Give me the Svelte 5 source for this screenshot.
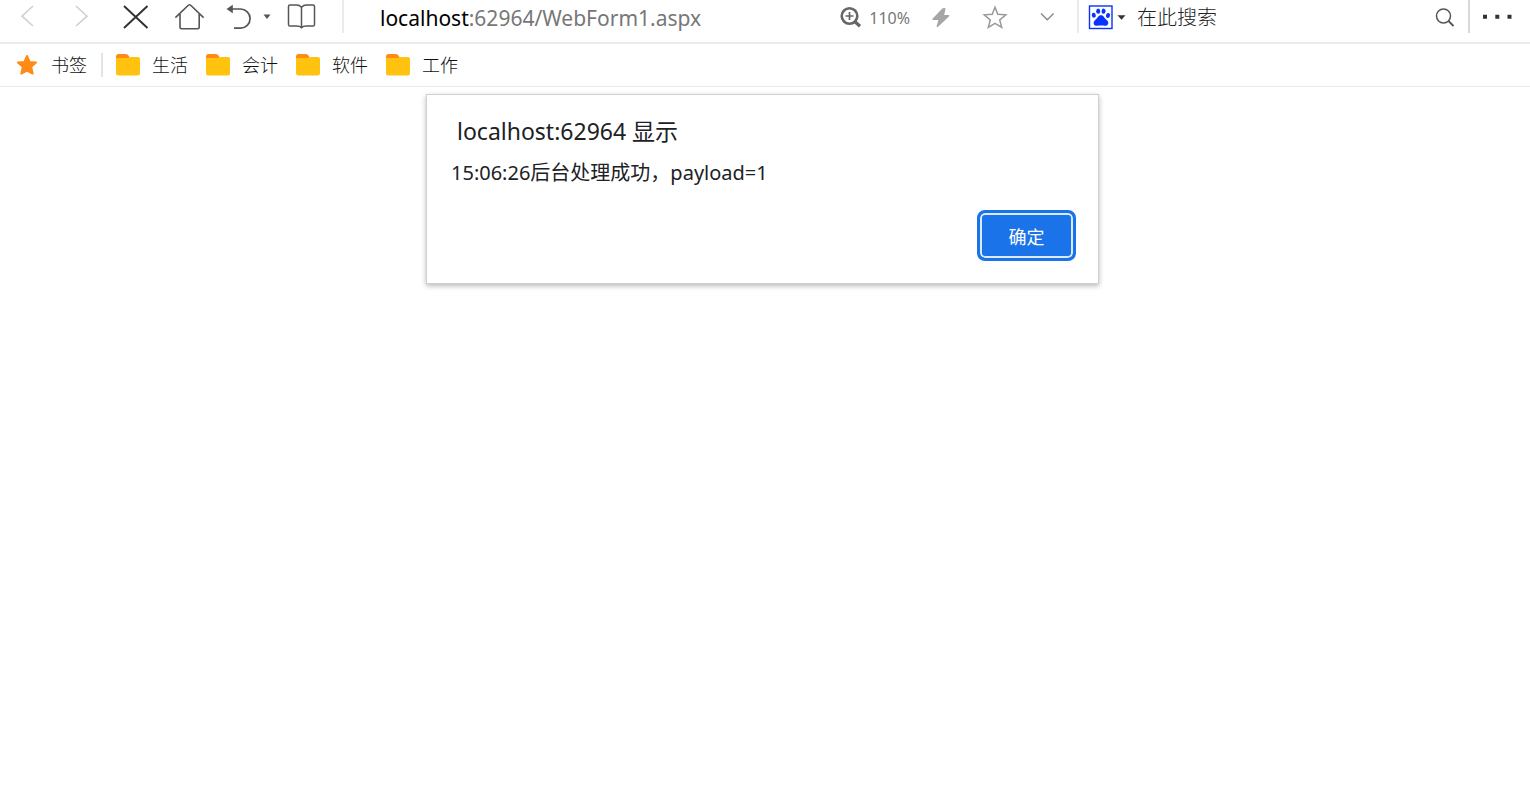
<script>
  const folders = ['生活', '会计', '软件', '工作'];
  let open = $state(true);
</script>

<div class="browser">
  <header class="toolbar">
    <nav class="nav" aria-label="导航">
      <button class="tool" aria-label="后退">
        <svg width="54" height="34" viewBox="0 0 54 34"><path d="M33 6 22 16.2 33 26" fill="none" stroke="#d0d0d0" stroke-width="1.6" /></svg>
      </button>
      <button class="tool" aria-label="前进">
        <svg width="54" height="34" viewBox="0 0 54 34"><path d="M22 6 33 16.2 22 26" fill="none" stroke="#d0d0d0" stroke-width="1.6" /></svg>
      </button>
      <button class="tool" aria-label="停止">
        <svg width="54" height="34" viewBox="0 0 54 34"><path d="M16 6 39.500 28M39.500 6 16 28" fill="none" stroke="#303030" stroke-width="1.9" /></svg>
      </button>
      <button class="tool" aria-label="主页">
        <svg width="54" height="34" viewBox="0 0 54 34"><path d="M13.400 17.600 25.500 6Q27.500 3.400 29.500 6L41.600 17.600M18 14V27Q18 28.700 19.700 28.700H35.500Q37.200 28.700 37.200 27V14" fill="none" stroke="#555" stroke-width="1.6" /></svg>
      </button>
      <button class="tool" aria-label="恢复">
        <svg width="42" height="34" viewBox="0 0 42 34"><path d="M14 9H24.500A9.600 9.600 0 0 1 24.500 28.200H18" fill="none" stroke="#555" stroke-width="1.7" /><path d="M10.500 9 16.800 4.700V13.300Z" fill="#555" /></svg>
      </button>
      <button class="tool" aria-label="恢复列表">
        <svg width="18" height="34" viewBox="0 0 18 34"><path d="M5.500 14.500H12.500L9 19Z" fill="#555" /></svg>
      </button>
      <button class="tool" aria-label="阅读">
        <svg width="52" height="34" viewBox="0 0 52 34"><path d="M25.500 7.300Q23.500 5.100 20.500 5.100H14Q12.500 5.100 12.500 6.700V24.500Q12.500 26.100 14 26.100H20.500Q24 26.100 25.500 27.700Q27 26.100 30.500 26.100H37Q38.500 26.100 38.500 24.500V6.700Q38.500 5.100 37 5.100H30.500Q27.500 5.100 25.500 7.300V27.300" fill="none" stroke="#555" stroke-width="1.5" /></svg>
      </button>
    </nav>

    <div class="address">
      <a class="url" href="#page"><span class="host">localhost</span>:62964/WebForm1.aspx</a>
      <button class="tool zoom" aria-label="缩放 110%">
        <svg width="24" height="34" viewBox="0 0 24 34"><circle cx="10.500" cy="16" r="7.800" fill="none" stroke="#666" stroke-width="2.600" /><path d="M16 21.700 21 26.300" stroke="#666" stroke-width="3.200" /><path d="M6.500 16H14.500M10.500 12V20" stroke="#666" stroke-width="1.700" /></svg>
        <span>110%</span>
      </button>
      <button class="tool" aria-label="极速模式">
        <svg width="54" height="34" viewBox="0 0 54 34"><path d="M28.800 9 19 19.200H25.300L23.300 26.500 34.700 15.700H29.300L30.800 8.800Z" fill="#a6a6a6" stroke="#a6a6a6" stroke-width="1.400" stroke-linejoin="round" /></svg>
      </button>
      <button class="tool" aria-label="收藏">
        <svg width="54" height="34" viewBox="0 0 54 34"><path d="M27 7.200 29.800 14.300 37.800 14.800 31.700 19.900 33.700 27.400 27 23.300 20.300 27.400 22.300 19.900 16.200 14.800 24.200 14.300Z" fill="none" stroke="#999" stroke-width="1.500" /></svg>
      </button>
      <button class="tool" aria-label="更多地址">
        <svg width="50" height="34" viewBox="0 0 50 34"><path d="M19 13.500 25.300 19.800 31.600 13.500" fill="none" stroke="#888" stroke-width="1.400" /></svg>
      </button>
    </div>

    <form class="search" onsubmit={(event) => event.preventDefault()}>
      <button class="tool" type="button" aria-label="选择搜索引擎">
        <svg width="40" height="34" viewBox="0 0 40 34">
          <rect x="1.500" y="6" width="22.500" height="22.500" fill="#fff" stroke="#0a32ff" stroke-width="1.400" />
          <g fill="#0a32ff">
            <ellipse cx="5.800" cy="15.200" rx="2" ry="2.500" transform="rotate(-15 5.800 15.200)" />
            <ellipse cx="10.200" cy="11.200" rx="2" ry="2.600" />
            <ellipse cx="15.600" cy="11.200" rx="2" ry="2.600" transform="rotate(10 15.600 11.200)" />
            <ellipse cx="20" cy="15.500" rx="2" ry="2.500" transform="rotate(15 20 15.500)" />
            <path d="M13 15.200C16 15.200 15.800 17.800 18.500 19.700C21.800 22 20.200 26 17 25.800C14.500 25.400 11.500 25.400 9 25.800C5.700 26 4.200 22.500 7.500 19.700C10 17.800 10 15.200 13 15.200Z" />
          </g>
          <path d="M29.500 15.200H37.500L33.500 19.700Z" fill="#333" />
        </svg>
      </button>
      <input type="search" aria-label="搜索" placeholder="在此搜索" />
      <button class="tool" aria-label="搜索">
        <svg width="46" height="34" viewBox="0 0 46 34"><circle cx="21.500" cy="16" r="7" fill="none" stroke="#555" stroke-width="1.500" /><path d="M26.500 21 31.500 26" stroke="#555" stroke-width="1.800" /></svg>
      </button>
    </form>

    <button class="tool more" aria-label="菜单">
      <svg width="60" height="34" viewBox="0 0 60 34"><path d="M13 14.800h4v4h-4zM25.300 14.800h4v4h-4zM37.500 14.800h4v4h-4z" fill="#333" /></svg>
    </button>
  </header>

  <nav class="bookmarks" aria-label="书签">
    <a class="bookmark favorites" href="#bookmarks">
      <svg width="22" height="24" viewBox="0 0 22 24"><path d="M11 3 13.600 9 20 9.500 15.200 13.800 16.700 20.600 11 17.500 5.300 20.600 6.800 13.800 2 9.500 8.400 9Z" fill="#ff8b17" stroke="#ff8b17" stroke-width="2" stroke-linejoin="round" /></svg>
      书签
    </a>
    <span class="divider"></span>
    {#each folders as folder}
      <a class="bookmark" href="#bookmarks">
        <svg width="24" height="24" viewBox="0 0 24 24"><path d="M0 3.500Q0 1 2.500 1H10Q12 1 13.500 4L12 9H0Z" fill="#ff8b17" /><path d="M0 6Q0 5 1.500 5H11.500Q12.500 5 13.500 4.300 14 4 15 4H22Q24 4 24 6V20Q24 22.500 21.500 22.500H2.500Q0 22.500 0 20Z" fill="#ffc20e" /></svg>
        {folder}
      </a>
    {/each}
  </nav>

  <main class="page" id="page">
    {#if open}
      <section class="dialog" role="alertdialog" aria-labelledby="dialog-title" aria-describedby="dialog-message">
        <h1 id="dialog-title">localhost:62964 显示</h1>
        <p id="dialog-message">15:06:26后台处理成功，payload=1</p>
        <button class="confirm" onclick={() => (open = false)}>确定</button>
      </section>
    {/if}
  </main>
</div>

<style>
  :global(body) {
    margin: 0;
    background: #fff;
  }

  .browser {
    min-height: 100vh;
    font-family: "Noto Sans", "Noto Sans CJK SC", sans-serif;
    color: #333;
  }

  .toolbar {
    display: flex;
    align-items: flex-start;
    height: 42px;
    border-bottom: 2px solid #ebebeb;
  }

  .nav,
  .address,
  .search {
    display: flex;
    align-items: center;
    height: 33px;
  }

  .nav {
    padding-right: 14px;
  }

  .tool {
    display: flex;
    align-items: center;
    flex: none;
    height: 33px;
    margin: 0;
    padding: 0;
    border: 0;
    background: none;
    font: inherit;
    color: inherit;
  }

  svg {
    display: block;
    flex: none;
  }

  .address {
    flex: 1;
    min-width: 0;
    padding: 0 5px 0 36px;
    border-left: 2px solid #ebebeb;
  }

  .url {
    flex: 1;
    min-width: 0;
    overflow: hidden;
    white-space: nowrap;
    padding-top: 2px;
    font-size: 21px;
    line-height: 32px;
    color: #777;
    text-decoration: none;
  }

  .host {
    color: #000;
  }

  .zoom {
    gap: 6px;
    padding-right: 4px;
    font-size: 16px;
    line-height: 32px;
    color: #777;
  }

  .zoom span {
    padding-top: 2px;
  }

  .search {
    flex: 0 0 391px;
    border-left: 2px solid #ebebeb;
    padding-left: 9px;
    box-sizing: border-box;
  }

  .search input {
    flex: 1;
    width: 0;
    min-width: 0;
    height: 33px;
    padding: 2px 9px 0;
    box-sizing: border-box;
    border: 0;
    outline: 0;
    background: none;
    font: 20px/30px "Noto Sans", "Noto Sans CJK SC", sans-serif;
    font-weight: 300;
    color: #222;
  }

  .search input::placeholder {
    color: #222;
    opacity: 1;
  }

  .more {
    border-left: 2px solid #d8d8d8;
  }

  .bookmarks {
    display: flex;
    align-items: center;
    gap: 18px;
    height: 42px;
    padding-left: 16px;
    border-bottom: 1px solid #ebebeb;
  }

  .bookmark {
    display: flex;
    align-items: center;
    gap: 12px;
    font-size: 18px;
    font-weight: 300;
    line-height: 24px;
    color: #111;
    text-decoration: none;
  }

  .favorites {
    gap: 13px;
  }

  .divider {
    width: 2px;
    height: 24px;
    margin: 0 -5px 0 -4px;
    background: #e4e4e4;
  }

  .page {
    display: flex;
    justify-content: center;
    align-items: flex-start;
    padding: 7px 5px 0 0;
  }

  .dialog {
    display: flex;
    flex-direction: column;
    width: 100%;
    max-width: 673px;
    padding: 19px 22px 22px 24px;
    box-sizing: border-box;
    border: 1px solid #d0d0d0;
    box-shadow: 0 2px 5px rgba(0, 0, 0, 0.28);
    color: #202124;
  }

  h1 {
    margin: 0;
    padding-left: 6px;
    font-size: 23px;
    line-height: 34px;
    font-weight: 400;
  }

  p {
    margin: 9px 0 21px;
    font-size: 20px;
    line-height: 32px;
  }

  .confirm {
    align-self: flex-end;
    min-width: 99px;
    height: 51px;
    padding: 2px 28px 0;
    border: 3px solid #1a73e8;
    border-radius: 8px;
    background: #1a73e8;
    box-shadow: inset 0 0 0 2px #dce9fc;
    font: 18px/26px "Noto Sans", "Noto Sans CJK SC", sans-serif;
    color: #fff;
  }
</style>
